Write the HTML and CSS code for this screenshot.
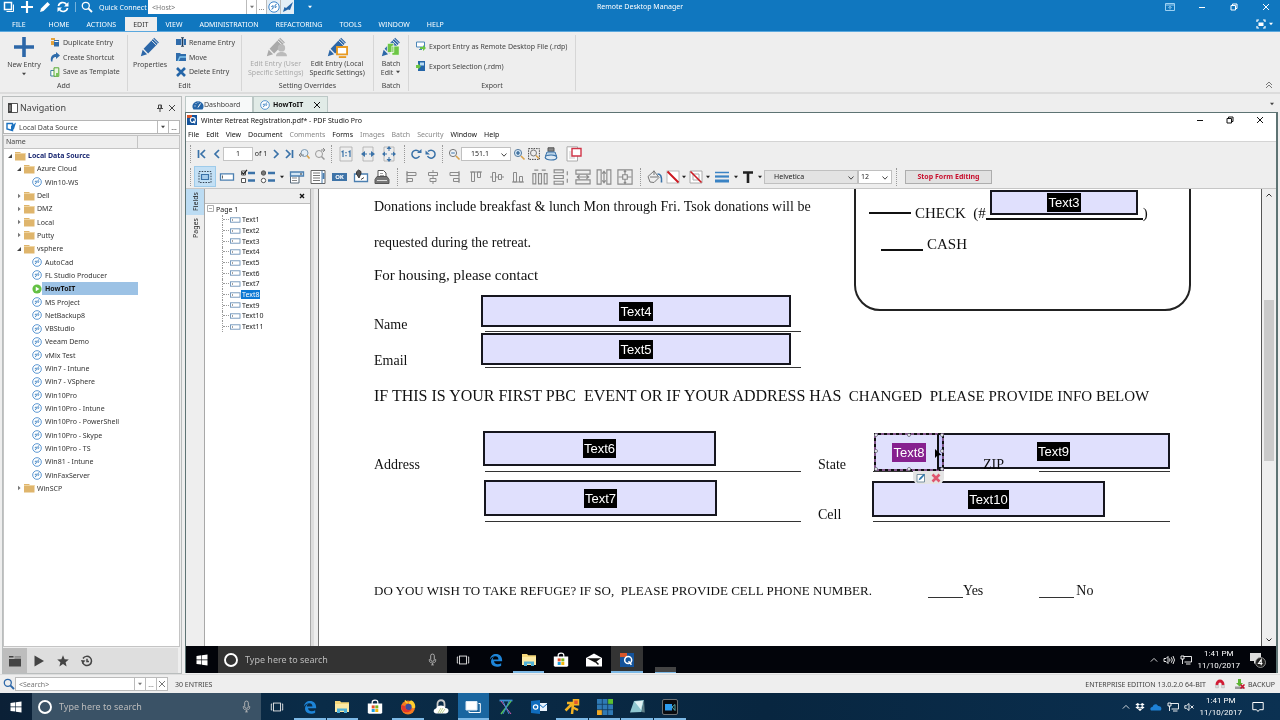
FILE: index.html
```html
<!DOCTYPE html>
<html lang="en">
<head>
<meta charset="utf-8">
<title>Remote Desktop Manager</title>
<link rel="stylesheet" href="styles.css">
</head>
<body>
<svg class="defs" aria-hidden="true">
  <symbol id="session" viewBox="0 0 12 12"><circle cx="6" cy="6" r="5.2" fill="#fff" stroke="#3f86cb" stroke-width="1"/><path d="M3.3 5.6l1.8-.9v2.6l-1.6 1M8.7 5.6l-1.6 1V4.1l1.6-1" fill="none" stroke="#2f78bd" stroke-width="1"/></symbol>
  <symbol id="play" viewBox="0 0 12 12"><circle cx="6" cy="6" r="5.5" fill="#63c043"/><path d="M4.5 3.2L9 6l-4.5 2.8z" fill="#fff"/></symbol>
  <symbol id="folder" viewBox="0 0 12 10"><path d="M1 1h5l1 1h4.500v7.500H1z" fill="#dfb56c"/><path d="M1 2.500h10.500" stroke="#f3dcae" stroke-width=".8"/></symbol>
  <symbol id="open" viewBox="0 0 6 6"><path d="M5 1v4H1z" fill="#444"/></symbol>
  <symbol id="shut" viewBox="0 0 6 6"><path d="M2 .8L4.600 3 2 5.200z" fill="#777"/></symbol>
  <symbol id="down" viewBox="0 0 6 4"><path d="M1 .7h4L3 3.300z" fill="currentColor"/></symbol>
  <symbol id="chev" viewBox="0 0 8 6"><path d="M1.500 1.500L4 4.200l2.500-2.700" fill="none" stroke="#444" stroke-width="1"/></symbol>
  <symbol id="cross" viewBox="0 0 8 8"><path d="M1 1l6 6M7 1L1 7" fill="none" stroke="currentColor" stroke-width="1"/></symbol>
  <symbol id="min" viewBox="0 0 8 8"><path d="M1 4.500h6" stroke="currentColor" stroke-width="1"/></symbol>
  <symbol id="rest" viewBox="0 0 8 8"><path d="M1 2.500h4.500V7H1zM2.500 2.500V1H7v4.500H5.500" fill="none" stroke="currentColor" stroke-width="1"/></symbol>
  <symbol id="lens" viewBox="0 0 12 12"><circle cx="4.800" cy="4.800" r="3.500" fill="none" stroke="currentColor" stroke-width="1.300"/><path d="M7.300 7.300L11 11" stroke="currentColor" stroke-width="1.900"/></symbol>
  <symbol id="pencil" viewBox="0 0 24 24"><path d="M2 22l2-7 4.800 5zM5 13.800L16.500 2l5.200 5L10 19z" fill="currentColor"/><path d="M13.500 4.800l5.400 5.200M15.300 3l5.400 5.300" stroke="#eee" stroke-width="1"/></symbol>
  <symbol id="plus" viewBox="0 0 20 20"><path d="M8.200 0h3.600v8.200H20v3.600h-8.200V20H8.200v-8.200H0V8.200h8.200z" fill="currentColor"/></symbol>
  <symbol id="win" viewBox="0 0 12 12"><path d="M.5 2l4.900-.7v4.300H.5zM6 1.200L11.500.4v5.200H6zM.5 6.300h4.900v4.300L.5 9.900zM6 6.300h5.500v5.200L6 10.700z" fill="#fff"/></symbol>
  <symbol id="ring" viewBox="0 0 16 16"><circle cx="8" cy="8" r="6" fill="none" stroke="#fff" stroke-width="1.900"/></symbol>
  <symbol id="mic" viewBox="0 0 10 14"><rect x="3" y="1" width="4" height="8" rx="1.800" fill="none" stroke="#bbb"/><path d="M1.500 6.500v2c0 3 7 3 7 0v-2M5 11v2M3.500 13h3" fill="none" stroke="#bbb" stroke-width=".9"/></symbol>
  <symbol id="task" viewBox="0 0 16 12"><rect x="4" y="1.500" width="8" height="9" fill="none" stroke="#eee"/><path d="M2.500 2.500h-1v7h1M13.500 2.500h1v7h-1" fill="none" stroke="#eee"/></symbol>
  <symbol id="edge" viewBox="0 0 16 16"><path d="M1 7.400C1.600 3.300 4.400 1 8 1c4.400 0 7 3.100 7 7v1.500H5.700c.2 2.300 2.200 3.300 4.200 3.300 1.500 0 2.900-.4 4-1.100v2.900c-1.200.7-3 1.100-4.800 1.100-4.200 0-6.800-2.500-6.800-5.900 0-2.500 1.400-4.400 3.500-5.500-1 1.200-1.400 1.900-1.500 3.200h6.500C10.800 5 9.500 3.700 7.300 3.700 5 3.700 2.600 5 1 7.400z" fill="#1e85d8"/></symbol>
  <symbol id="files" viewBox="0 0 16 14"><path d="M1 1h5l1.200 1.200H15V12H1z" fill="#f5d77a"/><path d="M1 4h14v8H1z" fill="#fbe9a4"/><path d="M3 13V8.500h10V13h-3v-2.300H6V13z" fill="#4fb1d8"/></symbol>
  <symbol id="store" viewBox="0 0 16 16"><path d="M5.200 5V3.200C5.200.5 10.800.5 10.800 3.200V5" fill="none" stroke="#fff" stroke-width="1.200"/><path d="M.8 4.600h14.400v9.200l-1 1H1.800l-1-1z" fill="#fff"/><path d="M4.700 6.400h3v3h-3z" fill="#e5502d"/><path d="M8.300 6.400h3v3h-3z" fill="#79b51c"/><path d="M4.700 10h3v3h-3z" fill="#1da1e2"/><path d="M8.300 10h3v3h-3z" fill="#f5b70b"/></symbol>
  <symbol id="pc" viewBox="0 0 12 10"><path d="M3.500 1.500h8v5.500H4.500M6 9h4.500M1 1h3v3H1zM2.500 4v5" fill="none" stroke="#fff" stroke-width=".9"/></symbol>
  <symbol id="up" viewBox="0 0 10 6"><path d="M1 5l4-4 4 4" fill="none" stroke="#fff"/></symbol>
  <symbol id="field" viewBox="0 0 12 6"><rect x="1.500" y=".8" width="9.500" height="4.400" fill="#fff" stroke="#6d93b9" stroke-width=".9"/><path d="M3.500 2v2" stroke="#777" stroke-width=".7"/></symbol>
  <symbol id="q" viewBox="0 0 12 12"><rect width="12" height="12" fill="#14539b"/><path d="M0 0h6v3.500H0z" fill="#d8562a"/><circle cx="7" cy="6" r="3" fill="none" stroke="#fff" stroke-width="1.300"/><path d="M7.300 7l2.500 3" stroke="#fff" stroke-width="1.300"/></symbol>
  <symbol id="none" viewBox="0 0 14 14"><rect x="1" y="1" width="12" height="12" fill="#fff" stroke="#aaa" stroke-width=".8"/><path d="M1.500 1.500l11 11" stroke="#cc1a22" stroke-width="1.900"/></symbol>
</svg>

<header class="top">
  <div class="titlebar">
    <svg class="i12" viewBox="0 0 12 12"><path d="M1.500 1.500h7v7h-7z" fill="none" stroke="#fff" stroke-width="1.500"/><path d="M10.500 3.500v7h-7" fill="none" stroke="#fff" stroke-width="1"/></svg>
    <svg class="i12 white"><use href="#plus"/></svg>
    <svg class="i12 white" viewBox="0 0 12 12"><path d="M1 11l1-3.500L8.500 1 11 3.500 4.500 10z" fill="#fff"/></svg>
    <svg class="i12" viewBox="0 0 12 12"><path d="M1.500 5C2 1.500 7 0 9.500 3.500M10.500 7C10 10.500 5 12 2.500 8.500" fill="none" stroke="#fff" stroke-width="1.700"/><path d="M11.500 1v4.500H7zM.5 11V6.500H5z" fill="#fff"/></svg>
    <span class="bar"></span>
    <svg class="i12 white"><use href="#lens"/></svg>
    <label class="quick" for="host">Quick Connect</label>
    <div class="hostbox">
      <input id="host" type="text" placeholder="&lt;Host&gt;">
      <button aria-label="Host list"><svg class="i6"><use href="#down"/></svg></button><button aria-label="More">…</button><button aria-label="Session type"><svg class="i12"><use href="#session"/></svg></button><button aria-label="Connect"><svg class="i12" viewBox="0 0 12 12"><path d="M1 11l1.500-5L4 7l7-6-3 8-2-.5z" fill="#2465a8"/></svg></button>
    </div>
    <svg class="i6 white more"><use href="#down"/></svg>
    <h1>Remote Desktop Manager</h1>
    <div class="wincontrols white">
      <button aria-label="Ribbon options"><svg class="i10" viewBox="0 0 10 10"><path d="M.5 1.500h9v7h-9zM.5 3h9M5 7.500V4.500M3.500 5.800L5 4.300l1.500 1.500" fill="none" stroke="#9cd0f2"/></svg></button>
      <button aria-label="Minimize"><svg class="i8"><use href="#min"/></svg></button>
      <button aria-label="Restore"><svg class="i8"><use href="#rest"/></svg></button>
      <button aria-label="Close"><svg class="i8"><use href="#cross"/></svg></button>
    </div>
  </div>
  <nav class="tabs">
    <button class="file">FILE</button><button>HOME</button><button>ACTIONS</button><button class="on">EDIT</button><button>VIEW</button><button>ADMINISTRATION</button><button>REFACTORING</button><button>TOOLS</button><button>WINDOW</button><button>HELP</button>
    <span class="fit"><svg class="i10" viewBox="0 0 10 10"><path d="M1 3V1h2M7 1h2v2M9 7v2H7M3 9H1V7" fill="none" stroke="#fff" stroke-width="1.200"/><path d="M2.500 3.500h5v3.500h-5z" fill="#fff"/></svg><svg class="i6 white"><use href="#down"/></svg></span>
  </nav>
</header>

<section class="ribbon" aria-label="Edit ribbon">
  <div class="group g-add">
    <div class="tools">
      <button class="big"><svg class="i20 blue"><use href="#plus"/></svg><span>New Entry</span><svg class="i6"><use href="#down"/></svg></button>
      <div class="stack">
        <button><svg class="i10" viewBox="0 0 10 10"><path d="M1 1h4v2H1zM1 4h3v4H1z" fill="#e3a33c"/><path d="M4 3h5v6.500H4z" fill="#2f6cab"/><path d="M4.500 4.500h4" stroke="#fff"/></svg>Duplicate Entry</button>
        <button><svg class="i10" viewBox="0 0 10 10"><path d="M1 9.500C0 4 3 2 6 2V0l4 3.500L6 7V5C4 5 2.500 6 2.500 9.500z" fill="#2f6cab"/></svg>Create Shortcut</button>
        <button><svg class="i10" viewBox="0 0 10 10"><path d="M.8 3.500h4v5.500h-4z" fill="#fff" stroke="#3d7f9f"/><path d="M4 .8h4.800v8.500H4z" fill="#eaf6e4" stroke="#57a832"/><path d="M6 6h3v3H6z" fill="#7bc35b"/></svg>Save as Template</button>
      </div>
    </div>
    <p>Add</p>
  </div>
  <div class="group g-edit">
    <div class="tools">
      <button class="big"><svg class="i22 blue"><use href="#pencil"/></svg><span>Properties</span></button>
      <div class="stack">
        <button><svg class="i10" viewBox="0 0 10 10"><path d="M0 2h5.500v6H0zM7.500 2H10v6H7.500z" fill="#2f6cab"/><path d="M5 .8h3M6.500.8v8.400M5 9.200h3" stroke="#223b55"/></svg>Rename Entry</button>
        <button><svg class="i10" viewBox="0 0 10 10"><path d="M0 1h4l1 1h5v7H0z" fill="#2f6cab"/><path d="M2 9l2-4h6" stroke="#7fc4ee" fill="none" stroke-width="1.500"/></svg>Move</button>
        <button><svg class="i10" viewBox="0 0 10 10"><path d="M1 1l8 8M9 1L1 9" stroke="#2465a8" stroke-width="2.600"/></svg>Delete Entry</button>
      </div>
    </div>
    <p>Edit</p>
  </div>
  <div class="group g-over">
    <div class="tools">
      <button class="big off" disabled><svg class="i22" viewBox="0 0 24 24"><use href="#pencil" width="24" height="24"/><circle cx="18" cy="13" r="4" fill="#bbb"/><path d="M12 22c0-6 12-6 12 0z" fill="#bbb"/></svg><span>Edit Entry (User<br>Specific Settings)</span></button>
      <button class="big"><svg class="i22 blue" viewBox="0 0 24 24"><use href="#pencil" width="24" height="24"/><path d="M12 12h11v8H12z" fill="#fff" stroke="#e89a21" stroke-width="2"/><path d="M14 23h8" stroke="#e89a21" stroke-width="2"/></svg><span>Edit Entry (Local<br>Specific Settings)</span></button>
    </div>
    <p>Setting Overrides</p>
  </div>
  <div class="group g-batch">
    <div class="tools">
      <button class="big"><svg class="i22 blue" viewBox="0 0 24 24"><use href="#pencil" width="24" height="24"/><path d="M8 8h7v10H8zM13 11h8v10h-8z" fill="#6cc644" stroke="#fff" stroke-width=".8"/></svg><span>Batch<br>Edit <svg class="i6"><use href="#down"/></svg></span></button>
    </div>
    <p>Batch</p>
  </div>
  <div class="group g-export">
    <div class="tools">
      <div class="stack two">
        <button><svg class="i10" viewBox="0 0 10 10"><path d="M.5 1h8v5h-8zM3 8.500h3" fill="#fff" stroke="#4a86b8"/><path d="M4 6h3V4l3 3-3 3V8H4z" fill="#6cc644"/></svg>Export Entry as Remote Desktop File (.rdp)</button>
        <button><svg class="i10" viewBox="0 0 10 10"><path d="M2 0h7v10H2z" fill="#2465a8"/><path d="M4 1.500h4v3H4z" fill="#b9dcf2"/><path d="M0 4h2V2.500L5 5.500l-3 3V7H0z" fill="#6cc644"/></svg>Export Selection (.rdm)</button>
      </div>
    </div>
    <p>Export</p>
  </div>
  <svg class="i8 collapse" viewBox="0 0 8 8"><path d="M1 4l3-3 3 3M1 7l3-3 3 3" fill="none" stroke="#777"/></svg>
</section>

<main class="work">
  <aside class="nav">
    <div class="navhead"><svg class="i10" viewBox="0 0 10 10"><path d="M.5.5h9v9h-9z" fill="#fff" stroke="#555"/><path d="M0 0h4v10H0z" fill="#444"/><path d="M1 3h2M1 5h2M1 7h2" stroke="#ccc" stroke-width=".8"/></svg><h2>Navigation</h2>
      <svg class="i8" viewBox="0 0 8 8"><path d="M2.500 1h3v3.500h-3zM1 4.500h6M4 4.500V8M5 1v3" fill="none" stroke="#444"/></svg><button aria-label="Close panel"><svg class="i8"><use href="#cross"/></svg></button></div>
    <div class="source"><svg class="i10" viewBox="0 0 10 10"><path d="M1 1.500h5.500v7L1 7z" fill="#fff" stroke="#1c72c0" stroke-width="1.400"/><path d="M5 4l5-3.500L8 7 5 9z" fill="#1c72c0"/></svg><select aria-label="Data source"><option>Local Data Source</option></select><span class="cell"><svg class="i6"><use href="#down"/></svg></span><button aria-label="More">…</button></div>
    <div class="colhead"><span>Name</span></div>
    <ul class="tree">
      <li class="l0"><svg class="i6"><use href="#open"/></svg><svg class="fold"><use href="#folder"/></svg><b>Local Data Source</b></li>
      <li class="l1"><svg class="i6"><use href="#open"/></svg><svg class="fold"><use href="#folder"/></svg><span>Azure Cloud</span></li>
      <li class="l2"><svg class="i10"><use href="#session"/></svg><span>Win10-WS</span></li>
      <li class="l1"><svg class="i6"><use href="#shut"/></svg><svg class="fold"><use href="#folder"/></svg><span>Dell</span></li>
      <li class="l1"><svg class="i6"><use href="#shut"/></svg><svg class="fold"><use href="#folder"/></svg><span>DMZ</span></li>
      <li class="l1"><svg class="i6"><use href="#shut"/></svg><svg class="fold"><use href="#folder"/></svg><span>Local</span></li>
      <li class="l1"><svg class="i6"><use href="#shut"/></svg><svg class="fold"><use href="#folder"/></svg><span>Putty</span></li>
      <li class="l1"><svg class="i6"><use href="#open"/></svg><svg class="fold"><use href="#folder"/></svg><span>vsphere</span></li>
      <li class="l2"><svg class="i10"><use href="#session"/></svg><span>AutoCad</span></li>
      <li class="l2"><svg class="i10"><use href="#session"/></svg><span>FL Studio Producer</span></li>
      <li class="l2 sel"><svg class="i10"><use href="#play"/></svg><span>HowToIT</span></li>
      <li class="l2"><svg class="i10"><use href="#session"/></svg><span>MS Project</span></li>
      <li class="l2"><svg class="i10"><use href="#session"/></svg><span>NetBackup8</span></li>
      <li class="l2"><svg class="i10"><use href="#session"/></svg><span>VBStudio</span></li>
      <li class="l2"><svg class="i10"><use href="#session"/></svg><span>Veeam Demo</span></li>
      <li class="l2"><svg class="i10"><use href="#session"/></svg><span>vMix Test</span></li>
      <li class="l2"><svg class="i10"><use href="#session"/></svg><span>Win7 - Intune</span></li>
      <li class="l2"><svg class="i10"><use href="#session"/></svg><span>Win7 - VSphere</span></li>
      <li class="l2"><svg class="i10"><use href="#session"/></svg><span>Win10Pro</span></li>
      <li class="l2"><svg class="i10"><use href="#session"/></svg><span>Win10Pro - Intune</span></li>
      <li class="l2"><svg class="i10"><use href="#session"/></svg><span>Win10Pro - PowerShell</span></li>
      <li class="l2"><svg class="i10"><use href="#session"/></svg><span>Win10Pro - Skype</span></li>
      <li class="l2"><svg class="i10"><use href="#session"/></svg><span>Win10Pro - TS</span></li>
      <li class="l2"><svg class="i10"><use href="#session"/></svg><span>Win81 - Intune</span></li>
      <li class="l2"><svg class="i10"><use href="#session"/></svg><span>WinFaxServer</span></li>
      <li class="l1"><svg class="i6"><use href="#shut"/></svg><svg class="fold"><use href="#folder"/></svg><span>WinSCP</span></li>
    </ul>
    <div class="navfoot">
      <button class="on" aria-label="Entries"><svg class="i12" viewBox="0 0 12 12"><path d="M0 1h4.500v1.500H0zM0 4h12v7.500H0z" fill="#444"/><path d="M5.500 1.800H12M5.500 3.200H12" stroke="#666" stroke-width=".7"/></svg></button>
      <button aria-label="Opened"><svg class="i12" viewBox="0 0 12 12"><path d="M1.500.5L11 6l-9.500 5.500z" fill="#444"/></svg></button>
      <button aria-label="Favorites"><svg class="i12" viewBox="0 0 12 12"><path d="M6 .3l1.600 3.900 4.200.3-3.200 2.700 1 4.200L6 9.100l-3.600 2.300 1-4.200L.2 4.500l4.200-.3z" fill="#444"/></svg></button>
      <button aria-label="Recent"><svg class="i12" viewBox="0 0 12 12"><path d="M2 3.500A4.600 4.600 0 1 1 1.800 8M6 3.800v2.700h2" fill="none" stroke="#444" stroke-width="1.500"/><path d="M0 5l4.500.5L1.500 9z" fill="#444"/></svg></button>
    </div>
  </aside>

  <section class="session">
    <div class="doctabs">
      <button><svg class="i12" viewBox="0 0 12 12"><path d="M1.500 10.500a5.400 5.400 0 1 1 9 0z" fill="#2465a8"/><path d="M6 8.500l2.500-4M2.500 7h1M3.500 4l.7.700M6 2.500v1" stroke="#fff" stroke-width="1"/></svg>Dashboard</button>
      <button class="on"><svg class="i10"><use href="#session"/></svg>HowToIT<svg class="i8 x"><use href="#cross"/></svg></button>
      <svg class="i6 list"><use href="#down"/></svg>
    </div>
    <div class="remote">
      <div class="pdftitle"><svg class="i10"><use href="#q"/></svg><h2>Winter Retreat Registration.pdf* - PDF Studio Pro</h2>
        <div class="wincontrols"><button aria-label="Minimize"><svg class="i8"><use href="#min"/></svg></button><button aria-label="Restore"><svg class="i8"><use href="#rest"/></svg></button><button aria-label="Close"><svg class="i8"><use href="#cross"/></svg></button></div></div>
      <nav class="menu"><button>File</button><button>Edit</button><button>View</button><button>Document</button><button disabled>Comments</button><button>Forms</button><button disabled>Images</button><button disabled>Batch</button><button disabled>Security</button><button>Window</button><button>Help</button></nav>

      <div class="bars">
        <div class="toolbar">
          <i class="sep"></i>
          <button class="w16" aria-label="First page"><svg class="i10" viewBox="0 0 10 10"><path d="M1.500 1v8M8 1L4 5l4 4" fill="none" stroke="#3a72a8" stroke-width="1.700"/></svg></button>
          <button class="w13" aria-label="Previous page"><svg class="i10" viewBox="0 0 10 10"><path d="M7 1L3 5l4 4" fill="none" stroke="#3a72a8" stroke-width="1.700"/></svg></button>
          <input class="pageno" aria-label="Page" value="1"><span class="w16 of">of 1</span>
          <button class="w13" aria-label="Next page"><svg class="i10" viewBox="0 0 10 10"><path d="M3 1l4 4-4 4" fill="none" stroke="#3a72a8" stroke-width="1.700"/></svg></button>
          <button class="w14" aria-label="Last page"><svg class="i10" viewBox="0 0 10 10"><path d="M8.500 1v8M2 1l4 4-4 4" fill="none" stroke="#3a72a8" stroke-width="1.700"/></svg></button>
          <button class="w16" aria-label="Previous view"><svg class="i12" viewBox="0 0 12 12"><circle cx="6.500" cy="5" r="3.500" fill="#e4eef6" stroke="#7d99b1"/><path d="M9 7.500l2.500 3" stroke="#d9a24a" stroke-width="1.600"/><path d="M1 7h5M3 5L1 7l2 2" stroke="#888" fill="none"/></svg></button>
          <button class="w15" aria-label="Next view"><svg class="i12" viewBox="0 0 12 12"><circle cx="5" cy="6" r="3.500" fill="none" stroke="#999"/><path d="M7.500 8.500l3 3" stroke="#999" stroke-width="1.500"/><path d="M7 2h4M9 0l2 2-2 2" stroke="#888" fill="none"/></svg></button>
          <i class="sep"></i>
          <button class="w22" aria-label="Actual size"><svg class="i16" viewBox="0 0 16 16"><path d="M2 1h12v14H2z" fill="#eee" stroke="#aaa" stroke-width=".8"/><path d="M3.500 6L5 5v6M10.500 6L12 5v6" fill="none" stroke="#3a72a8" stroke-width="1.200"/><path d="M8 6v1.300M8 9v1.300" stroke="#3a72a8" stroke-width="1.300"/></svg></button>
          <button class="w21" aria-label="Fit width"><svg class="i16" viewBox="0 0 16 16"><path d="M3 1h10v14H3z" fill="#eee" stroke="#aaa" stroke-width=".8"/><path d="M1 8l4-3v6zM15 8l-4-3v6z" fill="#3a72a8"/><path d="M5 8h2M9 8h2" stroke="#3a72a8"/></svg></button>
          <button class="w22" aria-label="Fit page"><svg class="i16" viewBox="0 0 16 16"><path d="M3 1h10v14H3z" fill="#eee" stroke="#aaa" stroke-width=".8"/><path d="M1 8l3-2.500v5zM15 8l-3-2.500v5zM8 0l2.500 3h-5zM8 16l2.500-3h-5z" fill="#3a72a8"/><path d="M4 8h2M10 8h2M8 3v2M8 11v2" stroke="#3a72a8"/></svg></button>
          <i class="sep"></i>
          <button class="w15" aria-label="Rotate right"><svg class="i12" viewBox="0 0 12 12"><path d="M9 3.600A4 4 0 1 0 9.500 8" fill="none" stroke="#3a72a8" stroke-width="1.500"/><path d="M7 5h4.500V1z" fill="#3a72a8"/></svg></button>
          <button class="w15" aria-label="Rotate left"><svg class="i12" viewBox="0 0 12 12"><path d="M3 3.600A4 4 0 1 1 2.500 8" fill="none" stroke="#3a72a8" stroke-width="1.500"/><path d="M5 6.500H.5v-4z" fill="#3a72a8"/></svg></button>
          <i class="sep"></i>
          <button class="w15" aria-label="Zoom out"><svg class="i12" viewBox="0 0 12 12"><circle cx="5" cy="5" r="3.600" fill="#eef3f7" stroke="#777"/><path d="M3.200 5h3.600" stroke="#3a72a8"/><path d="M8 8l3.500 3.500" stroke="#d9a24a" stroke-width="1.600"/></svg></button>
          <span class="combo zoom"><select aria-label="Zoom"><option>151.1</option></select><svg><use href="#chev"/></svg></span>
          <button class="w15" aria-label="Zoom in"><svg class="i12" viewBox="0 0 12 12"><circle cx="5" cy="5" r="3.600" fill="#cfe3f3" stroke="#5a7fa2"/><path d="M3 5h4M5 3v4" stroke="#24598c" stroke-width="1.200"/><path d="M8 8l3.500 3.500" stroke="#d9a24a" stroke-width="1.600"/></svg></button>
          <button class="w15" aria-label="Marquee zoom"><svg class="i12" viewBox="0 0 12 12"><path d="M.6.6h10.800v10.800H.6z" fill="none" stroke="#444" stroke-dasharray="1.500 1"/><circle cx="5.500" cy="5" r="3" fill="#eee" stroke="#777"/><path d="M8 7.500l3 3" stroke="#d9a24a" stroke-width="1.500"/></svg></button>
          <button class="w20" aria-label="Loupe"><svg class="i14" viewBox="0 0 14 14"><path d="M4 .8h6v3.400H4z" fill="#888" stroke="#555"/><path d="M3 5h8l1.500 4h-11z" fill="#b8d2e8" stroke="#3a72a8"/><ellipse cx="7" cy="10.500" rx="5.800" ry="2.500" fill="#dce9f4" stroke="#3a72a8" stroke-width="1.200"/></svg></button>
          <button class="w26" aria-label="Overview"><svg class="i16" viewBox="0 0 16 16"><path d="M1 .8h10.500V15H1z" fill="#fff" stroke="#aaa"/><path d="M3 6h3M3 8h5M3 10h6M3 12h6" stroke="#bbb" stroke-width=".8"/><path d="M6 2.500h9v7.500H6z" fill="#fff" stroke="#d03447" stroke-width="1.400"/></svg></button>
        </div>
        <div class="toolbar">
          <i class="sep"></i>
          <button class="w22 on" aria-label="Select fields"><svg class="i14" viewBox="0 0 14 14"><path d="M1 1.500h12v11H1z" fill="none" stroke="#345" stroke-width="1" stroke-dasharray="1.500 1.200"/><path d="M3.500 4.500h7v5h-7z" fill="#a7cdec" stroke="#3a72a8" stroke-width="1.200"/></svg></button>
          <button class="w21" aria-label="Text field"><svg class="i16" viewBox="0 0 16 16"><path d="M1.500 4.800h13v6.400h-13z" fill="#fff" stroke="#4b7fb0" stroke-width="1.300"/><path d="M3.500 6.500v3" stroke="#666"/></svg></button>
          <button class="w21" aria-label="Check box"><svg class="i16" viewBox="0 0 16 16"><path d="M1.500 2h4v4h-4zM1.500 9.500h4v4h-4z" fill="#fff" stroke="#555"/><path d="M2 3.500l1.500 1.500L7 .8" fill="none" stroke="#222" stroke-width="1.200"/><path d="M8 4h7M8 11.500h7" stroke="#3a72a8" stroke-width="2.400"/></svg></button>
          <button class="w20" aria-label="Radio button"><svg class="i16" viewBox="0 0 16 16"><circle cx="3.500" cy="4" r="2.200" fill="#777" stroke="#555"/><circle cx="3.500" cy="11.500" r="2.200" fill="#fff" stroke="#555"/><path d="M8 4h7M8 11.500h7" stroke="#3a72a8" stroke-width="2.400"/></svg></button>
          <button class="w8" aria-label="More field types"><svg class="i6"><use href="#down"/></svg></button>
          <button class="w21" aria-label="Combo box"><svg class="i16" viewBox="0 0 16 16"><path d="M1.500 6.500h8.500V14H1.500z" fill="#fff" stroke="#567"/><path d="M1.500 3h13v4h-13z" fill="#d3e6f5" stroke="#4b7fb0" stroke-width="1.300"/><path d="M3 9h5M3 11.500h5" stroke="#888"/><path d="M11 5h2" stroke="#333"/></svg></button>
          <button class="w22" aria-label="List box"><svg class="i16" viewBox="0 0 16 16"><path d="M1 1.500h14v13H1z" fill="#fff" stroke="#666"/><path d="M12 1.500v13" stroke="#4b7fb0"/><path d="M3 4h7M3 6.500h7M3 9h7M3 11.500h7" stroke="#777" stroke-width="1.100"/><path d="M12.500 4h2v6h-2z" fill="#4b7fb0"/></svg></button>
          <button class="w21" aria-label="Button"><span class="ok">OK</span></button>
          <button class="w21" aria-label="Signature"><svg class="i16" viewBox="0 0 16 16"><path d="M1.500 5h13v7.500h-13z" fill="#fff" stroke="#4b7fb0" stroke-width="1.300"/><path d="M3.500 2.800L5.500 1l2.500 1.500v2L6 9 3.500 5z" fill="#555" stroke="#222" stroke-width=".8"/><path d="M8 10.500l3-2" stroke="#444"/></svg></button>
          <button class="w22" aria-label="Print"><svg class="i16" viewBox="0 0 16 16"><path d="M4 8V1.500h5.500L12 4v4" fill="#fff" stroke="#555"/><path d="M6 4.500h3M6 6.500h4" stroke="#888" stroke-width=".8"/><path d="M3 7.500h10l2 3v4H1v-4z" fill="#777" stroke="#555"/><path d="M3 11.500h10" stroke="#ddd"/></svg></button>
          <i class="sep"></i>
          <div class="align">
            <button aria-label="Align left"><svg class="i14" viewBox="0 0 14 14"><path d="M2 1v12M2 2.500h9v3H2zM2 8.500h5.500v3H2z"/></svg></button>
            <button aria-label="Align center"><svg class="i14" viewBox="0 0 14 14"><path d="M7 0v2.500M7 5.500v3M7 11.500V14M2.500 2.500h9v3h-9zM4 8.500h6v3H4z"/></svg></button>
            <button aria-label="Align right"><svg class="i14" viewBox="0 0 14 14"><path d="M12 1v12M3 2.500h9v3H3zM6.500 8.500H12v3H6.500z"/></svg></button>
            <button aria-label="Align top"><svg class="i14" viewBox="0 0 14 14"><path d="M1 2h12M2.500 2h3v9.500h-3zM8.500 2h3v5.500h-3z"/></svg></button>
            <button aria-label="Align middle"><svg class="i14" viewBox="0 0 14 14"><path d="M0 7h2.500M5.500 7h3M11.500 7H14M2.500 2.500h3v9h-3zM8.500 4.500h3v5h-3z"/></svg></button>
            <button aria-label="Align bottom"><svg class="i14" viewBox="0 0 14 14"><path d="M1 12h12M2.500 2.500h3V12h-3zM8.500 6.500h3V12h-3z"/></svg></button>
            <button aria-label="Space across"><svg class="i16" viewBox="0 0 14 14"><path d="M.8 4h2.500v9H.8zM5.700 4h2.600v9H5.700zM10.700 4h2.500v9h-2.500zM2 1h3.500M8.500 1H12"/></svg></button>
            <button aria-label="Space down"><svg class="i16" viewBox="0 0 14 14"><path d="M1 .8h8v2.500H1zM1 5.700h8v2.600H1zM1 10.700h8v2.500H1zM12.500 2v3.500M12.500 8.500V12"/></svg></button>
            <button aria-label="Same width"><svg class="i16" viewBox="0 0 14 14"><path d="M.8 1h12.400v3.500H.8zM.8 9.500h12.400V13H.8zM2 7h10M4 5.500L2 7l2 1.500M10 5.500L12 7l-2 1.500"/></svg></button>
            <button aria-label="Same height"><svg class="i16" viewBox="0 0 14 14"><path d="M1 .8h3.500v12.400H1zM9.500.8H13v12.400H9.500zM7 2v10M5.500 4L7 2l1.500 2M5.500 10L7 12l1.500-2"/></svg></button>
            <button aria-label="Same size"><svg class="i16" viewBox="0 0 14 14"><path d="M.8.8h12.400v12.400H.8zM5 5h4v4H5zM7 1.500v3.500M7 9v3.500M1.500 7H5M9 7h3.500M6 2.500l1-1 1 1M6 11.500l1 1 1-1"/></svg></button>
          </div>
          <i class="sep"></i>
          <button class="w22" aria-label="Fill"><svg class="i16" viewBox="0 0 16 16"><path d="M1 7.500L7 2l5 6.500-5 5-4-.5z" fill="#eee" stroke="#777"/><path d="M7 6V1.500M3 8h8" fill="none" stroke="#777"/><path d="M10.500 5c3 0 4.500 2 4 8.500" fill="none" stroke="#3a72a8" stroke-width="1.600"/></svg></button>
          <button class="w14" aria-label="Fill color"><svg class="i14"><use href="#none"/></svg></button>
          <button class="w8" aria-label="Fill list"><svg class="i6"><use href="#down"/></svg></button>
          <button class="w16" aria-label="Border color"><svg class="i14" viewBox="0 0 14 14"><path d="M1 1h12v12H1zM4 4h6v6H4z" fill="#fff" stroke="#aaa"/><path d="M1.500 1.500l11 11" stroke="#cc1a22" stroke-width="1.600"/></svg></button>
          <button class="w8" aria-label="Border list"><svg class="i6"><use href="#down"/></svg></button>
          <button class="w20" aria-label="Line width"><svg class="i14" viewBox="0 0 14 14"><path d="M0 2.500h14" stroke="#3a83c4" stroke-width="1.500"/><path d="M0 6.500h14" stroke="#3a83c4" stroke-width="2.200"/><path d="M0 11h14" stroke="#3a83c4" stroke-width="3"/></svg></button>
          <button class="w8" aria-label="Width list"><svg class="i6"><use href="#down"/></svg></button>
          <button class="w16" aria-label="Text color"><svg class="i12" viewBox="0 0 12 12"><path d="M1 1.500h10M6 1.500V12" fill="none" stroke="#222" stroke-width="2.600"/></svg></button>
          <button class="w8" aria-label="Text color list"><svg class="i6"><use href="#down"/></svg></button>
          <span class="combo face"><select aria-label="Font"><option>Helvetica</option></select><svg><use href="#chev"/></svg></span>
          <span class="combo size"><select aria-label="Font size"><option>12</option></select><svg><use href="#chev"/></svg></span>
          <i class="sep"></i>
          <button class="stop">Stop Form Editing</button>
        </div>
      </div>

      <div class="pdfbody">
        <div class="sidetabs"><button class="on">Fields</button><button>Pages</button></div>
        <div class="fields">
          <div class="fieldhead"><button aria-label="Close fields"><svg class="i6" viewBox="0 0 6 6"><path d="M1 1l4 4M5 1L1 5" stroke="#111" stroke-width="1.400"/></svg></button></div>
          <ul class="fieldtree">
            <li><svg class="i8" viewBox="0 0 8 8"><path d="M.5.5h6v6h-6zM2 3.500h3" fill="#fff" stroke="#999" stroke-width=".8"/></svg>Page 1</li>
            <li><svg><use href="#field"/></svg><span>Text1</span></li><li><svg><use href="#field"/></svg><span>Text2</span></li><li><svg><use href="#field"/></svg><span>Text3</span></li><li><svg><use href="#field"/></svg><span>Text4</span></li><li><svg><use href="#field"/></svg><span>Text5</span></li><li><svg><use href="#field"/></svg><span>Text6</span></li><li><svg><use href="#field"/></svg><span>Text7</span></li><li class="sel"><svg><use href="#field"/></svg><span>Text8</span></li><li><svg><use href="#field"/></svg><span>Text9</span></li><li><svg><use href="#field"/></svg><span>Text10</span></li><li><svg><use href="#field"/></svg><span>Text11</span></li>
          </ul>
        </div>
        <div class="splitter"></div>
        <article class="sheet">
          <p class="r1">Donations include breakfast &amp; lunch Mon through Fri. Tsok donations will be</p>
          <p class="r2">requested during the retreat.</p>
          <p class="r3">For housing, please contact</p>
          <div class="row r4"><span>Name</span><i></i></div>
          <div class="row r5"><span>Email</span><i></i></div>
          <p class="r6"><span>IF THIS IS YOUR FIRST PBC &nbsp;EVENT OR IF YOUR ADDRESS HAS</span> &nbsp;CHANGED &nbsp;PLEASE PROVIDE INFO BELOW</p>
          <div class="row r7"><span>Address</span><i></i><span>State</span><i></i><span>ZIP</span><i></i></div>
          <div class="row r8"><span></span><i></i><span>Cell</span><i></i></div>
          <div class="ask r9"><span class="question">DO YOU WISH TO TAKE REFUGE? IF SO, &nbsp;PLEASE PROVIDE CELL PHONE NUMBER.</span><i></i><span>Yes</span><i></i><span>No</span></div>
          <div class="paybox">
            <div><i></i><span>CHECK &nbsp;(#</span><i class="long"></i><span>)</span></div>
            <div><i></i><span>CASH</span></div>
          </div>
          <div class="field f3"><b>Text3</b></div>
          <div class="field f4"><b>Text4</b></div>
          <div class="field f5"><b>Text5</b></div>
          <div class="field f6"><b>Text6</b></div>
          <div class="field f7"><b>Text7</b></div>
          <div class="field f9"><b>Text9</b></div>
          <div class="field f10"><b>Text10</b></div>
          <div class="field f8"><b>Text8</b></div>
          <svg class="handles" viewBox="0 0 70 38"><rect x="1" y="1" width="68" height="36" fill="none" stroke="#111" stroke-width="2"/><rect x="1" y="1" width="68" height="36" fill="none" stroke="#a56bb0" stroke-width="1.500" stroke-dasharray="3 3"/><path d="M64 1v36" stroke="#111" stroke-width="1.500"/><g fill="#fff" stroke="#667" stroke-width=".8"><circle cx="2" cy="2" r="1.500"/><circle cx="35" cy="2" r="1.500"/><circle cx="68" cy="2" r="1.500"/><circle cx="2" cy="18" r="1.500"/><circle cx="68" cy="18" r="1.500"/><circle cx="2" cy="36" r="1.500"/><circle cx="35" cy="36" r="1.500"/><circle cx="68" cy="36" r="1.500"/></g><path d="M61 16v9l2.500-2.500 4-.5z" fill="#000"/></svg>
          <div class="minibar"><svg class="i10" viewBox="0 0 10 10"><path d="M1 1.500h7.500V9H1z" fill="#fff" stroke="#78909f"/><path d="M2.500 7.500l1-2.500L8 .8l1 1-4 4.500z" fill="#2e78ae"/></svg><svg class="i10" viewBox="0 0 10 10"><path d="M1.500 1.500l7 7M8.500 1.500l-7 7" stroke="#e0566f" stroke-width="2.600"/></svg></div>
        </article>
        <div class="scroll"><svg class="i8" viewBox="0 0 8 8"><path d="M1.500 5.500L4 3l2.500 2.500" fill="none" stroke="#333"/></svg><span></span><svg class="i8" viewBox="0 0 8 8"><path d="M1.500 2.500L4 5l2.500-2.500" fill="none" stroke="#333"/></svg></div>
      </div>

      <footer class="taskbar inner">
        <button class="start" aria-label="Start"><svg class="i12"><use href="#win"/></svg></button>
        <label class="find"><svg class="i16"><use href="#ring"/></svg><input type="text" placeholder="Type here to search"><svg class="mic"><use href="#mic"/></svg></label>
        <div class="apps">
          <button aria-label="Task view"><svg class="i14"><use href="#task"/></svg></button>
          <button aria-label="Edge"><svg class="i14"><use href="#edge"/></svg></button>
          <button class="run" aria-label="Files"><svg class="i16"><use href="#files"/></svg></button>
          <button aria-label="Store"><svg class="i16"><use href="#store"/></svg></button>
          <button aria-label="Mail"><svg class="i16" viewBox="0 0 16 16"><path d="M0 6l8-4.500L16 6v8.500H0z" fill="#fff"/><path d="M1 6.200h14L9 10.500z" fill="#111"/><path d="M8 8l4.500 4.500" stroke="#111" stroke-width="1.500"/></svg></button>
          <button class="run lit" aria-label="PDF Studio"><svg class="i14"><use href="#q"/></svg></button>
        </div>
        <span class="thumb"></span>
        <div class="tray">
          <svg class="i8"><use href="#up"/></svg>
          <svg class="i12" viewBox="0 0 12 12"><path d="M1 4.500h2L5 2.500v7l-2-2H1zM6.500 4.500q1 1.500 0 3M8.300 3.300q2 2.700 0 5.400M10 2q3 4 0 8" fill="none" stroke="#fff" stroke-width=".9"/></svg>
          <svg class="i12"><use href="#pc"/></svg>
          <time>1:41 PM<br>11/10/2017</time>
          <svg class="i16" viewBox="0 0 16 16"><path d="M0 1h11v8H7l-3 3V9H0z" fill="#ddd"/><circle cx="10.500" cy="10.500" r="5" fill="#222" stroke="#aaa" stroke-width=".8"/><path d="M11.200 13.300V7.800L8.500 11.500h4" fill="none" stroke="#fff" stroke-width="1.100"/></svg>
        </div>
      </footer>
    </div>
  </section>
</main>

<div class="status">
  <svg class="i12 blue"><use href="#lens"/></svg>
  <div class="searchbox"><input type="text" aria-label="Search" placeholder="&lt;Search&gt;"><button aria-label="Search list"><svg class="i6"><use href="#down"/></svg></button><button aria-label="More">…</button><button aria-label="Clear"><svg class="i8"><use href="#cross"/></svg></button></div>
  <span class="count">30 ENTRIES</span>
  <span>ENTERPRISE EDITION 13.0.2.0 64-BIT</span>
  <svg class="i10 magnet" viewBox="0 0 10 10"><path d="M2 6V5a3 3 0 0 1 6 0v1" fill="none" stroke="#d11c34" stroke-width="2.800"/><path d="M.6 6.300h2.800v2.500H.6zM6.600 6.300h2.800v2.500H6.600z" fill="#ddd" stroke="#999" stroke-width=".4"/></svg>
  <svg class="i10" viewBox="0 0 10 10"><path d="M3 0h3v4h2L4.500 7.500 1 4h2z" fill="#5cb531"/><path d="M0 7.500h9V10H0z" fill="#999"/><path d="M5.500 5.500l4 4M9.500 5.500l-4 4" stroke="#c8102e" stroke-width="1.500"/></svg>
  <span class="backup">BACKUP</span>
</div>

<footer class="taskbar outer">
  <button class="start" aria-label="Start"><svg class="i12"><use href="#win"/></svg></button>
  <label class="find"><svg class="i16"><use href="#ring"/></svg><input type="text" placeholder="Type here to search"><svg class="mic"><use href="#mic"/></svg></label>
  <div class="apps">
    <button aria-label="Task view"><svg class="i14"><use href="#task"/></svg></button>
    <button class="run" aria-label="Edge"><svg class="i14"><use href="#edge"/></svg></button>
    <button class="run" aria-label="Files"><svg class="i16"><use href="#files"/></svg></button>
    <button aria-label="Store"><svg class="i16"><use href="#store"/></svg></button>
    <button class="run" aria-label="Firefox"><svg class="i16" viewBox="0 0 16 16"><circle cx="8" cy="8.500" r="7" fill="#f47b20"/><path d="M5 .8c-1 2 1 3 2 4l4-3.500c3 1 4.500 4 4.300 7.200-3 2-5-1-5.300-3z" fill="#ffce2e"/><circle cx="8.500" cy="8" r="3.200" fill="#3b4ba0"/><path d="M1 6c0 9 8 9 11 4-3 2-7 1-7-3z" fill="#e3352c"/></svg></button>
    <button aria-label="Cloud vault"><svg class="i16" viewBox="0 0 16 16"><path d="M4.500 8V5c0-5 7-5 7 0v3" fill="none" stroke="#ccc" stroke-width="1.800"/><path d="M3 14.500c-4-1-2-5 0-5 1-3.500 8-4 9.500-.5 4 0 4 5 .5 5.500z" fill="#fff"/><path d="M5 14l3-5M7 14l3-5M9 14l3-4" stroke="#a3bd62" stroke-width=".7"/></svg></button>
    <button class="run active" aria-label="Remote Desktop Manager"><svg class="i16" viewBox="0 0 16 16"><path d="M1 2.500h11v8.500H1z" fill="#fff" stroke="#dbe9f5"/><path d="M13.500 4.500h1.800v9H4v-1.500" fill="none" stroke="#fff"/></svg></button>
    <button aria-label="Analyzer"><svg class="i16" viewBox="0 0 16 16"><path d="M1.500 1.500h13" stroke="#3d8fd0" stroke-width="1.800"/><path d="M3 2l10 13" stroke="#d15bb1"/><path d="M13 2L3 15" stroke="#57c257" stroke-width="1.400"/><path d="M5 2l3 7 3-7M5 15l3-6 3 6" fill="none" stroke="#3d8fd0"/></svg></button>
    <button aria-label="Outlook"><svg class="i16" viewBox="0 0 16 16"><path d="M8 4h8v8H8z" fill="#e8f2fb"/><path d="M8 5l4 3.500L16 5" fill="none" stroke="#0f6cbd"/><path d="M0 2l9-1v14l-9-1z" fill="#0f6cbd"/><circle cx="4.600" cy="8" r="2.200" fill="none" stroke="#fff" stroke-width="1.200"/></svg></button>
    <button class="run" aria-label="Jump tool"><svg class="i16" viewBox="0 0 16 16"><path d="M3 4h6L1.500 11.500M9 5l-1 10M8 8l6 3" fill="none" stroke="#f3b325" stroke-width="2.500"/><path d="M9.500.8h5v5h-5z" fill="#e4572e" stroke="#f3b325" stroke-width="1.500"/></svg></button>
    <button class="run" aria-label="Grid tool"><svg class="i16" viewBox="0 0 16 16"><path d="M0 0h16v16H0z" fill="#2f7ab5"/><path d="M10.700 0H16v5.300h-5.300z" fill="#5dc12f"/><path d="M0 10.700h5.300V16H0z" fill="#f2a922"/><path d="M5.300 0v16M10.700 0v16M0 5.300h16M0 10.700h16" stroke="#12395b" stroke-width=".8"/></svg></button>
    <button class="run" aria-label="Notepad"><svg class="i16" viewBox="0 0 16 16"><path d="M5 2l10-1-2.500 12L1 13.500z" fill="#8fc6cf"/><path d="M5.500 2.500l8.500-.8-2 9z" fill="#e1f3f5"/><path d="M12.500 13L15 1l.8 12.500z" fill="#5f7f88"/></svg></button>
    <button class="run" aria-label="Recorder"><svg class="i16" viewBox="0 0 16 16"><rect x=".5" y=".5" width="15" height="15" rx="1.500" fill="#0a0c10" stroke="#888" stroke-width=".8"/><path d="M3 5h7v6.500H3z" fill="#2c9cf0"/><path d="M10 8l3-2.500v6z" fill="none" stroke="#6cc" stroke-width=".8"/></svg></button>
  </div>
  <div class="tray">
    <svg class="i8"><use href="#up"/></svg>
    <svg class="i10" viewBox="0 0 10 10"><path d="M2.700 1L5 2.500 2.700 4 .4 2.500zM7.300 1l2.300 1.500L7.300 4 5 2.500zM2.700 4L5 5.500 2.700 7 .4 5.500zM7.300 4l2.300 1.500L7.300 7 5 5.500zM5 6.300L7 7.600 5 9 3 7.600z" fill="#fff"/></svg>
    <svg class="i12" viewBox="0 0 12 12"><path d="M1 9.500C-.5 7.500 1 6 2.500 6 3 3 7 2 8 5c3-.5 4.500 3 2.500 4.500z" fill="#1e81d6"/></svg>
    <svg class="i12"><use href="#pc"/></svg>
    <svg class="i10" viewBox="0 0 10 10"><path d="M.8 3.700h1.700L5 1.500v7L2.500 6.300H.8zM6.500 3.500l3 3M9.500 3.500l-3 3" fill="none" stroke="#fff" stroke-width=".9"/></svg>
    <time>1:41 PM<br>11/10/2017</time>
    <svg class="i12" viewBox="0 0 12 12"><path d="M.8 1.500h10.400v7.200H7.500L6 10.500 4.500 8.700H.8z" fill="none" stroke="#fff"/></svg>
  </div>
</footer>
</body>
</html>
```

FILE: styles.css
```css
* { box-sizing: border-box; }
body {
  margin: 0; height: 100vh; overflow: hidden; display: flex; flex-direction: column;
  font: 7px/9px "Noto Sans", "Open Sans", sans-serif; color: #444; background: #eee;
}
button, input, select {
  font: inherit; color: inherit; border: 0; padding: 0; margin: 0; background: none; border-radius: 0;
  appearance: none; outline: 0; min-width: 0;
}
h1, h2, p, ul { margin: 0; padding: 0; font: inherit; list-style: none; }
svg { display: block; flex: none; overflow: visible; }
button { display: flex; align-items: center; justify-content: center; white-space: nowrap; }
.defs { display: none; }
.i6 { width: 6px; height: 6px; }
.i8 { width: 8px; height: 8px; }
.i10 { width: 10px; height: 10px; }
.i12 { width: 12px; height: 12px; }
.i14 { width: 14px; height: 14px; }
.i16 { width: 16px; height: 16px; }
.i20 { width: 20px; height: 20px; }
.i22 { width: 22px; height: 22px; }
.white { color: #fff; }
.blue { color: #2c67a8; }

/* window header */
.top { background: #1077bf; color: #fff; flex: none; }
.titlebar { height: 17px; display: flex; align-items: center; padding: 0 8px 3px 3px; position: relative; }
.titlebar > .i12 { margin-right: 6px; }
.bar { width: 1px; height: 10px; background: #74b2dc; margin-right: 5px; }
.quick { width: 49px; }
.hostbox { display: flex; height: 14px; background: #fff; color: #777; }
.hostbox input { width: 98px; padding-left: 4px; }
.hostbox button { width: 10px; border-left: 1px solid #bbb; }
.hostbox button:nth-of-type(n+3) { width: 14px; background: #e4eef6; }
.more { margin-left: 13px; }
.titlebar h1 { position: absolute; left: 0; right: 0; top: 2px; text-align: center; pointer-events: none; }
.wincontrols { margin-left: auto; display: flex; align-items: center; gap: 20px; }
.wincontrols button { width: 12px; }
.tabs { display: flex; height: 15px; padding: 0 6px 0 4px; border-bottom: 1px solid #5aa8de; }
.tabs button { padding: 0 9px 0 8px; }
.tabs .file { margin-right: 6px; }
.tabs .on { background: #eee; color: #333; }
.fit { margin-left: auto; display: flex; align-items: center; gap: 2px; }

/* ribbon */
.ribbon { height: 62px; flex: none; display: flex; padding: 3px 0 1px; border-bottom: 2px solid #dcdcdc; position: relative; }
.group { display: flex; flex-direction: column; justify-content: space-between; border-right: 1px solid #d6d6d6; }
.group p { text-align: center; height: 10px; }
.tools { display: flex; height: 44px; padding-left: 4px; }
.big { flex-direction: column; justify-content: flex-start; gap: 2px; padding-top: 1px; text-align: center; }
.big span { line-height: 9px; }
.big span .i6 { display: inline-block; }
.off { color: #aaa; }
.g-add { width: 128px; }
.g-edit { width: 114px; }
.g-over { width: 132px; }
.g-batch { width: 35px; }
.g-export { width: 167px; }
.g-add .big { width: 40px; }
.g-add .big .i20 { margin: 1px 0; }
.g-edit .big { width: 36px; }
.g-over .tools { gap: 6px; }
.g-over .big, .g-batch .big { gap: 1px; }
.g-batch .tools, .g-over .tools { padding-left: 6px; }
.stack { display: flex; flex-direction: column; padding-left: 6px; }
.g-edit .stack { padding-left: 8px; }
.stack button { height: 15px; gap: 3px; justify-content: flex-start; }
.stack.two { padding-left: 3px; padding-top: 1px; }
.stack.two button { height: 20px; }
.collapse { position: absolute; right: 7px; bottom: 3px; }

/* main split */
.work { flex: 1; display: flex; min-height: 0; }
.nav { width: 180px; margin: 2px 0 0 2px; border: 1px solid #b9bdbd; display: flex; flex-direction: column; }
.navhead { display: flex; align-items: center; height: 21px; padding: 0 5px; gap: 4px; }
.navhead h2 { font-size: 9px; flex: 1; margin-left: -2px; }
.source { display: flex; align-items: center; height: 14px; margin: 2px 1px 1px 0; border: 1px solid #b5b5b5; background: #fff; padding-left: 2px; }
.source select { flex: 1; padding-left: 3px; }
.source .cell, .source button { width: 11px; height: 12px; border-left: 1px solid #bbb; display: flex; align-items: center; justify-content: center; }
.colhead { height: 14px; border: 1px solid #c4c4c4; margin-right: 1px; display: flex; }
.colhead span { width: 134px; border-right: 1px solid #c4c4c4; padding: 1px 2px; }
.tree { flex: 1; background: #fff; margin-right: 1px; border: 1px solid #c4c4c4; border-top: 0; display: grid; grid-auto-rows: 1fr; padding-bottom: 151px; }
.tree li { display: flex; align-items: center; color: #333; min-height: 0; }
.tree .fold { width: 12px; height: 10px; margin: 0 2px 0 1px; }
.l0 { padding-left: 3px; }
.l0 b { color: #1c2a73; }
.l1 { padding-left: 12px; }
.l2 { padding-left: 28px; }
.l2 span { padding-left: 3px; }
.sel span { font-weight: 700; }
.tree .sel span { background: #9cc2e5; margin-right: 41px; flex: 1; align-self: stretch; line-height: 13px; color: #111; }
.navfoot { height: 25px; background: #dedede; display: flex; margin: 1px 3px 0 0; }
.navfoot button { width: 24px; }
.navfoot .on { background: #bdbdbd; }

/* document tabs */
.session { flex: 1; min-width: 0; display: flex; flex-direction: column; margin: 2px 2px 0 3px; }
.doctabs { display: flex; height: 16px; align-items: stretch; }
.doctabs button { background: #f7f9f9; border: 1px solid #bcc8c6; border-bottom: 0; gap: 0; width: 68px; justify-content: flex-start; padding-left: 6px; }
.doctabs .on { background: #e1ebe7; width: 75px; font-weight: 700; color: #111; gap: 3px; }
.doctabs .x { margin-left: 7px; }
.list { margin: 5px 3px 0 auto; }
.remote { flex: 1; min-height: 0; display: flex; flex-direction: column; border: 1px solid #5d7373; border-width: 1px 2px 0 1px; margin-bottom: 1px; }
.pdftitle { background: #fff; height: 14px; display: flex; align-items: center; padding: 0 10px 0 1px; color: #111; gap: 4px; }
.pdftitle .wincontrols { gap: 18px; }
.menu { background: #fff; height: 15px; display: flex; padding-left: 2px; gap: 7px; border-bottom: 1px solid #d4d4d4; color: #111; }
.menu button:disabled { color: #888; }

/* toolbars */
.bars { background: #eee; border-bottom: 1px solid #c6c6c6; color: #222; }
.toolbar { height: 23px; display: flex; align-items: center; }
.toolbar > * { flex: none; }
.sep { width: 8px; height: 18px; display: flex; justify-content: center; }
.sep::before { content: ""; border-left: 1px dotted #999; }
.w8 { width: 8px; }
.w13 { width: 13px; }
.w14 { width: 14px; }
.w15 { width: 15px; }
.w16 { width: 16px; }
.w20 { width: 20px; }
.w21 { width: 21px; }
.w22 { width: 22px; }
.w26 { width: 26px; }
.toolbar .on { background: #c3e0f5; border: 1px solid #9ecbea; height: 21px; }
.pageno { width: 30px; height: 14px; background: #fff; border: 1px solid #c4c4c4; text-align: center; }
.of { text-align: center; white-space: nowrap; }
.combo { display: flex; height: 14px; border: 1px solid #c0c0c0; background: #fff; position: relative; }
.combo select { flex: 1; padding-left: 9px; }
.combo svg { position: absolute; right: 2px; top: 4px; width: 8px; height: 6px; pointer-events: none; }
.zoom { width: 50px; }
.face { width: 94px; background: #e3e3e3; }
.size { width: 34px; }
.size select { padding-left: 2px; }
.ok { background: #3f74a8; color: #fff; font-size: 6px; line-height: 8px; width: 15px; font-weight: 700; }
.align { width: 235px; display: flex; }
.align button { flex: 1; }
.align path { fill: none; stroke: #8a8a8a; stroke-width: 1; }
.stop { margin-left: 5px; width: 87px; height: 14px; background: #e1e1e1; border: 1px solid #adadad; color: #c8102e; font-weight: 700; }

/* editor body */
.pdfbody { flex: 1; min-height: 0; display: flex; }
.sidetabs { width: 18px; }
.sidetabs button { writing-mode: vertical-rl; transform: rotate(180deg); width: 18px; height: 26px; color: #222; }
.sidetabs .on { background: #bcdcf3; }
.fields { width: 107px; background: #fff; border: 1px solid #a8a8a8; border-width: 0 1px; }
.fieldhead { height: 15px; background: #eee; border-bottom: 1px solid #bbb; display: flex; justify-content: flex-end; padding-right: 5px; }
.fieldtree { height: 128px; display: grid; grid-auto-rows: 1fr; color: #222; }
.fieldtree li { display: flex; align-items: center; min-height: 0; padding-left: 2px; gap: 1px; }
.fieldtree li + li { margin-left: 17px; padding-left: 0; border-left: 1px dotted #999; gap: 0; }
.fieldtree li + li::before { content: ""; width: 6px; border-top: 1px dotted #999; }
.fieldtree li + li svg { width: 12px; height: 6px; }
.fieldtree span { padding: 0 1px; }
.fieldtree .sel span { background: #0c78d4; color: #fff; font-weight: 400; }
.splitter { width: 8px; background: #eee; border: 1px solid #777; border-width: 0 1px 0 0; box-shadow: inset 3px 0 #ddd; }
.sheet { flex: 1; min-width: 0; background: #fff; position: relative; overflow: hidden; padding: 8px 0 0 55px; font: 14px/20px "Liberation Serif", serif; color: #111; white-space: nowrap; }
.r2, .r5 { margin-top: 16px; }
.r3 { margin-top: 12px; font-size: 15px; }
.r4, .r8 { margin-top: 30px; }
.r6 { margin-top: 15px; font-size: 15px; }
.r6 span { font-size: 16px; }
.r7 { margin-top: 49px; }
.r9 { margin-top: 56px; }
.row { display: grid; grid-template-columns: 111px 316px; }
.r7, .r8 { grid-template-columns: 111px 316px 17px 55px 67px 43px 56px 131px; }
.r7 span:nth-of-type(2), .r8 span:nth-of-type(2) { grid-column: 4; }
.r7 span:nth-of-type(3) { grid-column: 7; }
.r8 i:nth-of-type(2) { grid-column: 5 / 9; }
.sheet i { height: 17px; border-bottom: 1px solid #333; }
.ask { display: flex; }
.question { font-size: 13px; }
.ask i { width: 35px; margin-left: 56px; }
.ask i:last-of-type { margin-right: 2px; }
.paybox { position: absolute; left: 535px; top: -40px; width: 337px; height: 162px; border: 2px solid #222; border-radius: 0 0 26px 26px; padding: 52px 0 0 13px; font-size: 15px; }
.paybox div { display: flex; height: 31px; gap: 4px; }
.paybox i { width: 42px; border-bottom: 2px solid #111; height: 11px; }
.paybox .long { width: 157px; margin-left: -4px; margin-right: -4px; height: 17px; }
.paybox div + div { padding-left: 12px; }
.paybox div + div i { height: 17px; }

/* form fields on the canvas */
.field { position: absolute; border: 2px solid #16161e; background: #e0e0fd; mix-blend-mode: multiply; display: flex; align-items: center; justify-content: center; }
.field b { font: 13px/19px "Liberation Sans", sans-serif; background: #000; color: #fff; padding: 0 1px; }
.f3 { left: 671px; top: 1px; width: 148px; height: 25px; }
.f4 { left: 162px; top: 106px; width: 310px; height: 32px; }
.f5 { left: 162px; top: 144px; width: 310px; height: 32px; }
.f6 { left: 164px; top: 242px; width: 233px; height: 35px; }
.f7 { left: 165px; top: 291px; width: 233px; height: 36px; }
.f8 { left: 555px; top: 244px; width: 70px; height: 38px; border: 0; }
.f8 b { background: #86208f; }
.f9 { left: 618px; top: 244px; width: 233px; height: 36px; }
.f10 { left: 553px; top: 292px; width: 233px; height: 36px; }
.handles { position: absolute; left: 555px; top: 244px; width: 70px; height: 38px; }
.minibar { position: absolute; left: 594px; top: 282px; width: 31px; height: 13px; background: #e4e4e4; border-radius: 0 0 6px 6px; display: flex; align-items: center; justify-content: center; gap: 5px; }
.scroll { width: 15px; background: #eee; border-left: 1px solid #555; display: flex; flex-direction: column; align-items: center; padding: 2px 0; }
.scroll span { width: 10px; height: 161px; margin: 101px 0 auto; background: #cacaca; }

/* taskbars */
.taskbar { display: flex; height: 27px; flex: none; }
.inner { background: #02040a; }
.outer { background: linear-gradient(90deg, #0b2036, #0a2c48 25%, #082640 60%, #0b3152); }
.start { width: 32px; }
.find { display: flex; align-items: center; width: 229px; padding: 0 10px 0 5px; gap: 6px; background: #333; color: #bbb; font-size: 9px; }
.outer .find { background: #3a5266; }
.find input { flex: 1; }
::placeholder { color: inherit; opacity: 1; }
.mic { width: 9px; height: 13px; }
.apps { display: flex; width: 197px; }
.outer .apps { width: 426px; }
.apps button { flex: 1; margin-right: 1px; border-bottom: 2px solid transparent; padding-top: 2px; }
.apps .run { border-bottom-color: #7db9e6; }
.apps .lit { background: #343434; }
.apps .active { background: #1a66a0; }
.thumb { align-self: flex-end; width: 21px; height: 6px; margin-left: 11px; background: #444; border-bottom: 1px solid #7db9e6; }
.tray { margin-left: auto; display: flex; align-items: center; color: #fff; gap: 5px; padding-right: 10px; }
.tray time { font: 8px/12px Roboto, sans-serif; text-align: center; margin-right: 5px; }
.outer .tray { padding-right: 16px; }

/* status bar */
.status { height: 19px; flex: none; display: flex; align-items: center; padding: 0 5px 0 3px; border-top: 1px solid #ddd; }
.searchbox { display: flex; height: 14px; background: #fff; border: 1px solid #bbb; width: 153px; color: #777; }
.searchbox input { flex: 1; padding-left: 3px; }
.searchbox button { width: 11px; border-left: 1px solid #bbb; }
.count { margin: 0 auto 0 7px; }
.magnet { margin: 0 10px 0 9px; }
.backup { margin-left: 3px; }
```
